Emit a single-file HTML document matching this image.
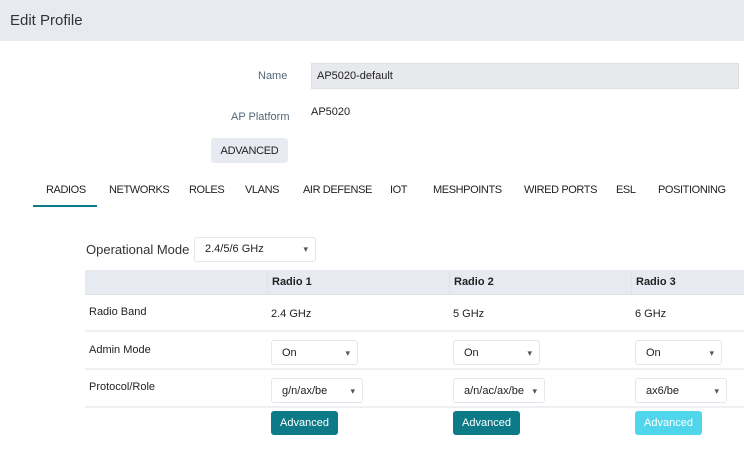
<!DOCTYPE html><html><head><style>
body{margin:0;width:744px;height:455px;background:#fff;font-family:"Liberation Sans",sans-serif;color:#222;position:relative;overflow:hidden}
.a{position:absolute;white-space:nowrap}
.hdr{left:0;top:0;width:744px;height:41px;background:#e7ebf1}
.sel{position:absolute;border:1px solid #e3e6ea;border-radius:3px;background:#fff;font-size:11px;box-sizing:border-box;padding-left:10px;line-height:24px}
.sel:after{content:"▾";position:absolute;right:7px;top:0;font-size:9px;color:#555}
.btn{position:absolute;background:#0d7a87;color:#fff;font-size:11px;border-radius:3px;text-align:center;line-height:24px;width:67px;height:24px}
.tab{position:absolute;top:184px;font-size:11px;color:#222;letter-spacing:-0.4px}
.line{position:absolute;left:85px;width:659px;height:2px;background:#eef0f3}
</style></head><body>
<div class="a hdr"></div>
<div class="a" style="left:10px;top:12px;font-size:15px;color:#333">Edit Profile</div>
<div class="a" style="left:258px;top:70px;font-size:11px;color:#556577">Name</div>
<div class="a" style="left:311px;top:63px;width:428px;height:26px;background:#e7e9ec;border:1px solid #dde0e4;box-sizing:border-box;font-size:11px;line-height:24px;padding-left:5px">AP5020-default</div>
<div class="a" style="left:231px;top:111px;font-size:11px;color:#556577">AP Platform</div>
<div class="a" style="left:311px;top:106px;font-size:11px">AP5020</div>
<div class="a" style="left:211px;top:138px;width:77px;height:25px;background:#e7ebf1;border-radius:3px;font-size:11px;text-align:center;line-height:26px;letter-spacing:-0.3px">ADVANCED</div>
<div class="tab" style="left:46px">RADIOS</div>
<div class="tab" style="left:109px">NETWORKS</div>
<div class="tab" style="left:189px">ROLES</div>
<div class="tab" style="left:245px">VLANS</div>
<div class="tab" style="left:303px">AIR DEFENSE</div>
<div class="tab" style="left:390px">IOT</div>
<div class="tab" style="left:433px">MESHPOINTS</div>
<div class="tab" style="left:524px">WIRED PORTS</div>
<div class="tab" style="left:616px">ESL</div>
<div class="tab" style="left:658px">POSITIONING</div>
<div class="a" style="left:33px;top:205px;width:64px;height:2px;background:#0d7a87"></div>
<div class="a" style="left:86px;top:242px;font-size:13px;color:#333">Operational Mode</div>
<div class="sel" style="left:194px;top:237px;width:122px;height:25px;line-height:23px">2.4/5/6 GHz</div>
<div class="a" style="left:85px;top:270px;width:659px;height:24px;background:#e7ebf1;border-bottom:1px solid #dfe2e7"></div>
<div class="a" style="left:267px;top:270px;width:1px;height:24px;background:#dfe2e7"></div>
<div class="a" style="left:449px;top:270px;width:1px;height:24px;background:#dfe2e7"></div>
<div class="a" style="left:631px;top:270px;width:1px;height:24px;background:#dfe2e7"></div>
<div class="a" style="left:272px;top:276px;font-size:11px;font-weight:bold">Radio 1</div>
<div class="a" style="left:454px;top:276px;font-size:11px;font-weight:bold">Radio 2</div>
<div class="a" style="left:636px;top:276px;font-size:11px;font-weight:bold">Radio 3</div>
<div class="line" style="top:330px"></div><div class="line" style="top:368px"></div><div class="line" style="top:406px"></div>
<div class="a" style="left:89px;top:306px;font-size:11px">Radio Band</div>
<div class="a" style="left:271px;top:308px;font-size:11px">2.4 GHz</div>
<div class="a" style="left:453px;top:308px;font-size:11px">5 GHz</div>
<div class="a" style="left:635px;top:308px;font-size:11px">6 GHz</div>
<div class="a" style="left:89px;top:344px;font-size:11px">Admin Mode</div>
<div class="sel" style="left:271px;top:340px;width:87px;height:25px">On</div>
<div class="sel" style="left:453px;top:340px;width:87px;height:25px">On</div>
<div class="sel" style="left:635px;top:340px;width:87px;height:25px">On</div>
<div class="a" style="left:89px;top:381px;font-size:11px">Protocol/Role</div>
<div class="sel" style="left:271px;top:378px;width:92px;height:25px">g/n/ax/be</div>
<div class="sel" style="left:453px;top:378px;width:92px;height:25px">a/n/ac/ax/be</div>
<div class="sel" style="left:635px;top:378px;width:92px;height:25px">ax6/be</div>
<div class="btn" style="left:271px;top:411px">Advanced</div>
<div class="btn" style="left:453px;top:411px">Advanced</div>
<div class="btn" style="left:635px;top:411px;background:#4fd6ea">Advanced</div>
</body></html>
